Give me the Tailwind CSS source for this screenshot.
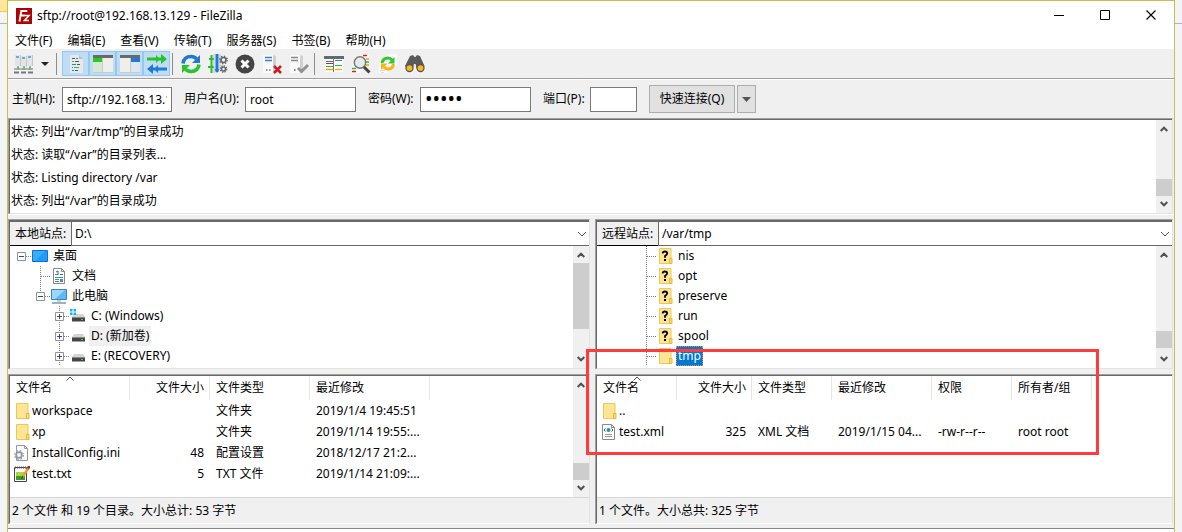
<!DOCTYPE html>
<html lang="zh-CN">
<head>
  <meta charset="UTF-8">
  <title>sftp://root@192.168.13.129 - FileZilla</title>
  <script src="https://cdn.jsdelivr.net/npm/@tailwindcss/browser@4"></script>
</head>
<body class="min-h-screen bg-[#f3f4f6] font-['Noto_Sans','Noto_Sans_CJK_SC',sans-serif] text-xs text-black">

  <!-- shared icons -->
  <svg class="hidden">
    <symbol id="folder" viewBox="0 0 14 16">
      <path d="M.5.5h11.500v15H.5z" fill="#fde596" stroke="#ecc85a"/>
      <path d="M10.500 10.500h2.500v5h-2.500z" fill="#fbd873" stroke="#e5b93c"/>
    </symbol>
    <symbol id="unknown" viewBox="0 0 14 16">
      <path d="M.5.5h11.500v15H.5z" fill="#fde596" stroke="#ecc85a"/>
      <path d="M10.500 10.500h2.500v5h-2.500z" fill="#fbd873" stroke="#e5b93c"/>
      <path d="M3.800 5.500V4.500Q4 3.500 6 3.500t2.300 1.600Q8.300 6.500 6 8v1.800" fill="none" stroke="#000" stroke-width="1.800"/>
      <path d="M5 11h2v2H5z"/>
    </symbol>
    <symbol id="drive" viewBox="0 0 17 16">
      <path d="M4 6h9l2 3H2z" fill="#d4d4d4"/>
      <path d="M2 9h13v4.500H2z" fill="#454545"/>
      <path d="M2 9h13v1H2z" fill="#8a8a8a"/>
      <path d="M11 11h2v1h-2z" fill="#38e04a"/>
    </symbol>
    <symbol id="up" viewBox="0 0 8 6"><path d="M.7 5 4 1.700 7.300 5" fill="none" stroke="#505050" stroke-width="2"/></symbol>
    <symbol id="down" viewBox="0 0 8 6"><path d="M.7 1 4 4.300 7.300 1" fill="none" stroke="#505050" stroke-width="2"/></symbol>
    <symbol id="chevron" viewBox="0 0 10 6"><path d="M1 1l4 4 4-4" fill="none" stroke="#555"/></symbol>
    <symbol id="box-minus" viewBox="0 0 9 9"><path d="M.5.5h8v8h-8z" fill="#fff" stroke="#919191"/><path d="M2 4.500h5" stroke="#2b4aa0"/></symbol>
    <symbol id="box-plus" viewBox="0 0 9 9"><path d="M.5.5h8v8h-8z" fill="#fff" stroke="#919191"/><path d="M2 4.500h5M4.500 2v5" stroke="#2b4aa0"/></symbol>
    <symbol id="drive-line" viewBox="0 0 60 20">
      <path d="M49.500 0v20M54 10.500h6" stroke="#808080" stroke-dasharray="1 1"/>
      <use href="#box-plus" x="45" y="6" width="9" height="9"/>
    </symbol>
    <symbol id="remote-line" viewBox="0 0 61 20"><path d="M49.500 0v20M50 10.500h10" stroke="#808080" fill="none" stroke-dasharray="1 1"/></symbol>
  </svg>

  <div class="relative flex min-h-screen">
    <div class="w-[7px] shrink-0">
      <div class="h-3 border-b border-[#f3c95b] bg-[#ffe699]"></div>
      <div class="h-3 border-b border-[#b4b4b4]"></div>
    </div>

    <div class="flex min-w-0 flex-1 flex-col border-x border-t border-[#cdbb4a] bg-[#f0f0f0]">
      <!-- title bar -->
      <header class="flex h-[29px] items-center bg-white pl-2">
        <svg class="size-4 shrink-0" viewBox="0 0 16 16">
          <path d="M0 0h16v16H0z" fill="#b40000"/>
          <path d="M.5.5h15v15H.5z" fill="none" stroke="#8c1010" stroke-dasharray="1 1"/>
          <path d="M3.500 13.500 5.300 3h6M4.500 7.500h4" fill="none" stroke="#fff" stroke-width="2"/>
          <path d="M8 7.500h5L8.500 12.500H13" fill="none" stroke="#fff" stroke-width="1.600"/>
        </svg>
        <h1 class="ml-[5px] flex-1">sftp://root@192.168.13.129 - FileZilla</h1>
        <button aria-label="最小化" class="grid h-full w-[46px] place-items-center"><svg class="size-[11px]" viewBox="0 0 11 11"><path d="M0 5.500h10" stroke="#000"/></svg></button>
        <button aria-label="最大化" class="grid h-full w-[46px] place-items-center"><svg class="size-[11px]" viewBox="0 0 11 11"><path d="M.5.5h9v9h-9z" fill="none" stroke="#000"/></svg></button>
        <button aria-label="关闭" class="grid h-full w-[46px] place-items-center"><svg class="size-[11px]" viewBox="0 0 11 11"><path d="M.5.5l9 9M9.500.5l-9 9" stroke="#000" stroke-width="1.200"/></svg></button>
      </header>

      <nav class="flex h-[19px] items-center gap-[15px] bg-white pt-0.5 pl-[7px]">
        <a href="#">文件(F)</a><a href="#">编辑(E)</a><a href="#">查看(V)</a><a href="#">传输(T)</a><a href="#">服务器(S)</a><a href="#">书签(B)</a><a href="#">帮助(H)</a>
      </nav>

      <!-- toolbar -->
      <div class="flex h-[30px] items-center border-b border-[#a0a0a0] pl-0.5">
        <button aria-label="站点管理器" class="grid h-[25px] w-7 place-items-center">
          <svg class="size-5" viewBox="0 0 20 20">
            <path d="M1 1h6v11H1zM7 2h6v11H7zM13 1h6v11h-6z" fill="#e2e5e8"/>
            <path d="M2 3h3M8 4h3M14 3h3" stroke="#4f93d8" stroke-width="1.500"/>
            <path d="M6.500 1v11M12.500 2v11M18.500 1v11" stroke="#c4c7ca"/>
            <path d="M4 12v4M10 12v4M16 12v4M0 15h19" stroke="#9a9a9a" stroke-width="1.500"/>
            <path d="M3 13h2v2H3zM9 13h2v2H9zM15 13h2v2h-2z" fill="#66bb66"/>
            <path d="M0 18.500h5M7 18.500h5M14 18.500h5" stroke="#777" stroke-width="2"/>
          </svg>
        </button>
        <button aria-label="站点列表" class="grid h-[25px] w-[14px] place-items-center"><svg class="h-1 w-2" viewBox="0 0 8 4"><path d="M0 0h8L4 4z" fill="#222"/></svg></button>
        <div class="mx-1 h-[22px] w-px bg-[#8d8d8d]"></div>
        <div class="ml-px flex">
          <button aria-label="消息日志" class="grid h-[25px] w-[27px] place-items-center border border-[#90c8f6] bg-[#c0dcf3]">
            <svg class="size-5" viewBox="0 0 20 20">
              <path d="M4 1h9l4 4v14H4z" fill="#e4e9ec"/><path d="M13 1l4 4h-4z" fill="#b9bfc4"/>
              <path d="M6 4.500h3M9 7.500h4M11 10.500h3M9 16.500h3" stroke="#555"/>
              <path d="M6 10.500h4M6 16.500h2" stroke="#2a80d8"/>
              <path d="M6 7.500h2M8 13.500h5" stroke="#3ab83a"/>
              <path d="M10 4.500h2M6 13.500h1" stroke="#2a80d8"/>
            </svg>
          </button>
          <button aria-label="本地目录树" class="grid h-[25px] w-[27px] place-items-center border border-[#90c8f6] bg-[#c0dcf3]">
            <svg class="size-5" viewBox="0 0 20 20">
              <path d="M0 1h20v18H0z" fill="#eeeeea"/><path d="M0 1h20v3H0z" fill="#6a6a6a"/>
              <path d="M0 4h9v4H0z" fill="#24cc24"/><path d="M0 8h9v11H0z" fill="#d7e8d2"/><path d="M9.500 4v15M0 18.500h20" stroke="#c8ccc8"/>
            </svg>
          </button>
          <button aria-label="远程目录树" class="grid h-[25px] w-[27px] place-items-center border border-[#90c8f6] bg-[#c0dcf3]">
            <svg class="size-5" viewBox="0 0 20 20">
              <path d="M0 1h20v18H0z" fill="#eeeeea"/><path d="M0 1h20v3H0z" fill="#6a6a6a"/>
              <path d="M11 4h9v4h-9z" fill="#1f7ad6"/><path d="M11 8h9v11h-9z" fill="#dce6f0"/><path d="M10.500 4v15M0 18.500h20" stroke="#c8ccc8"/>
            </svg>
          </button>
          <button aria-label="传输队列" class="grid h-[25px] w-[27px] place-items-center border border-[#90c8f6] bg-[#c0dcf3]">
            <svg class="size-5" viewBox="0 0 20 20">
              <path d="M0 3.500h9V1l2.500 2.500H14V0l6 5-6 5V6.500h-2.500L9 9V6.500H0z" fill="#26c526"/>
              <path d="M20 13.500h-9V11l-2.500 2.500H6V10l-6 5 6 5v-3.500h2.500L11 19v-2.500h9z" fill="#1f7ad6"/>
            </svg>
          </button>
        </div>
        <div class="mr-1 ml-0.5 h-[22px] w-px bg-[#8d8d8d]"></div>
        <button aria-label="刷新" class="grid h-[25px] w-[27px] place-items-center">
          <svg class="size-5" viewBox="0 0 20 20">
            <path d="M2 9.500Q3 2.500 10 2.500 13.500 2.500 15.500 5" fill="none" stroke="#1f7ad6" stroke-width="3.600"/><path d="M19 1v8h-8z" fill="#1f7ad6"/>
            <path d="M18 10.500Q17 17.500 10 17.500 6.500 17.500 4.500 15" fill="none" stroke="#26c52f" stroke-width="3.600"/><path d="M1 19v-8h8z" fill="#26c52f"/>
          </svg>
        </button>
        <button aria-label="处理队列" class="grid h-[25px] w-[27px] place-items-center">
          <svg class="size-5" viewBox="0 0 20 20">
            <path d="M3.500 1v18" stroke="#2bbd2b" stroke-width="2"/><path d="M1 5h5M0 13h6" stroke="#2bbd2b" stroke-width="2"/>
            <path d="M9 0v18" stroke="#1f7ad6" stroke-width="3"/><path d="M6.500 15h5L9 19z" fill="#1f7ad6"/><path d="M6 0v19M12 0v14" stroke="#9fb6c8" stroke-width=".8"/>
            <circle cx="15.500" cy="6" r="2.500" fill="none" stroke="#666" stroke-width="1.600"/><circle cx="15.500" cy="6" r="3.700" fill="none" stroke="#666" stroke-width="1.400" stroke-dasharray="1.400 1.500"/>
            <circle cx="15.500" cy="15" r="2" fill="none" stroke="#666" stroke-width="1.500"/><circle cx="15.500" cy="15" r="3.200" fill="none" stroke="#666" stroke-width="1.300" stroke-dasharray="1.300 1.200"/>
          </svg>
        </button>
        <button aria-label="取消" class="grid h-[25px] w-[27px] place-items-center">
          <svg class="size-5" viewBox="0 0 20 20"><circle cx="10" cy="10" r="9.500" fill="#444"/><path d="M6.500 6.500l7 7M13.500 6.500l-7 7" stroke="#fff" stroke-width="3"/></svg>
        </button>
        <button aria-label="断开连接" class="grid h-[25px] w-[27px] place-items-center">
          <svg class="size-5" viewBox="0 0 20 20">
            <path d="M1 1h10v18H1z" fill="#fafafa"/><path d="M11 1l3 1v16l-3 1z" fill="#d0d0d0"/>
            <path d="M3 3.500h7M3 6.500h7" stroke="#3a80c8" stroke-width="1.500"/><path d="M4 15h1.500v2H4zM7 15h1.500v2H7z" fill="#999"/>
            <path d="M12 12l7 7M19 12l-7 7" stroke="#c81e1e" stroke-width="2.500"/>
          </svg>
        </button>
        <button aria-label="重新连接" class="grid h-[25px] w-[27px] place-items-center">
          <svg class="size-5" viewBox="0 0 20 20">
            <path d="M1 1h10v18H1z" fill="#fafafa"/><path d="M11 1l3 1v16l-3 1z" fill="#d0d0d0"/>
            <path d="M2 3.500h7M2 6.500h7" stroke="#888" stroke-width="1.500"/><path d="M5 15h1.500v2H5z" fill="#888"/>
            <path d="M9 14l3.500 3.500L19 11" fill="none" stroke="#909090" stroke-width="3"/>
          </svg>
        </button>
        <div class="mx-0.5 h-[22px] w-px bg-[#8d8d8d]"></div>
        <div class="ml-[3px] flex">
          <button aria-label="过滤器" class="grid h-[25px] w-[27px] place-items-center">
            <svg class="size-5" viewBox="0 0 20 20">
              <path d="M1 3h18v15H1z" fill="#fff"/><path d="M0 2h20v3H0z" fill="#5f6a72"/>
              <path d="M2 7.500h7" stroke="#2a80d8"/><path d="M2 9.500h7" stroke="#d82020"/><path d="M2 12.500h7" stroke="#2bbd2b"/><path d="M2 15.500h7" stroke="#f0a000" stroke-width="1.500"/>
              <path d="M11 6.500h7" stroke="#2a80d8"/><path d="M11 11.500h7" stroke="#2bbd2b"/><path d="M11 15.500h7" stroke="#f0b030" stroke-width="1.500"/><path d="M9.500 5v13" stroke="#777"/>
            </svg>
          </button>
          <button aria-label="目录对比" class="grid h-[25px] w-[27px] place-items-center">
            <svg class="size-5" viewBox="0 0 20 20">
              <path d="M10 0h8v12h-8zM1 8h9v11H1z" fill="#f8f8f8"/>
              <path d="M12 1.500h4" stroke="#d82020" stroke-width="1.500"/><path d="M15 5h3M15 11h3" stroke="#f0a000" stroke-width="1.500"/><path d="M15 8h3M1 14.500h4" stroke="#2bbd2b" stroke-width="1.500"/><path d="M1 17.500h4" stroke="#d82020" stroke-width="1.500"/>
              <circle cx="9" cy="8.500" r="5.700" fill="#e3e9ee" fill-opacity=".9" stroke="#777" stroke-width="1.500"/><path d="M13 13l5.500 5.500" stroke="#444" stroke-width="3"/>
            </svg>
          </button>
          <button aria-label="同步浏览" class="grid h-[25px] w-[27px] place-items-center">
            <svg class="size-5" viewBox="0 0 20 20">
              <path d="M9 0h10v12H9zM1 8h9v11H1z" fill="#fafafa"/><path d="M2 16.500h5M3 18.500h3" stroke="#ddd"/>
              <path d="M4 9Q5 4 10 4q2.500 0 4 2" fill="none" stroke="#32c832" stroke-width="3"/><path d="M16.500 3v6.500H10z" fill="#32c832"/>
              <path d="M15.500 10Q15 15 10 15q-2.500 0-4-2" fill="none" stroke="#f8b515" stroke-width="3"/><path d="M3 16V9.500h6.500z" fill="#f8b515"/>
            </svg>
          </button>
          <button aria-label="查找文件" class="grid h-[25px] w-[27px] place-items-center">
            <svg class="size-5" viewBox="0 0 20 20">
              <path d="M5 2l3-1 1.500 2h1L12 1l3 1 4.500 10-3 3-5-1-1-4H9l-1 4-5 1-3-3z" fill="#5a5a5a"/>
              <circle cx="4.500" cy="14" r="3.500" fill="#fdb813" stroke="#555" stroke-width="1.300"/><circle cx="15.500" cy="14" r="3.500" fill="#fdb813" stroke="#555" stroke-width="1.300"/>
            </svg>
          </button>
        </div>
      </div>

      <!-- quickconnect -->
      <form class="flex h-[39px] items-center gap-3 border-t border-white pl-1">
        <div class="flex items-center"><label for="host" class="w-[50px]">主机(H):</label><input id="host" type="text" value="sftp://192.168.13.129" class="h-[25px] w-[110px] border border-[#7a7a7a] bg-white px-1"></div>
        <div class="flex items-center"><label for="user" class="w-[61px]">用户名(U):</label><input id="user" type="text" value="root" class="h-[25px] w-[111px] border border-[#7a7a7a] bg-white px-1"></div>
        <div class="flex items-center"><label for="pass" class="w-[52px]">密码(W):</label><input id="pass" type="password" value="12345" class="h-[25px] w-[111px] border border-[#7a7a7a] bg-white px-1 text-xl"></div>
        <div class="flex items-center"><label for="port" class="w-[47px]">端口(P):</label><input id="port" type="text" class="h-[25px] w-[47px] border border-[#7a7a7a] bg-white px-1"></div>
        <div class="flex gap-0.5">
          <button type="button" class="h-7 w-[86px] border border-[#adadad] bg-[#e1e1e1]">快速连接(Q)</button>
          <button type="button" aria-label="历史连接" class="grid h-7 w-[19px] place-items-center border border-[#adadad] bg-[#e1e1e1]"><svg class="h-[5px] w-[9px]" viewBox="0 0 9 5"><path d="M0 0h9L4.500 5z" fill="#555"/></svg></button>
        </div>
      </form>

      <!-- message log -->
      <section class="mr-px border-t border-l border-r border-t-[#a0a0a0] border-l-[#a0a0a0] border-r-[#e3e3e3]">
        <div class="flex border-t border-l border-t-[#696969] border-l-[#696969] border-b border-b-[#e3e3e3] bg-white">
          <div class="flex-1 pb-px pl-px leading-[23px]">
            <p>状态: 列出“/var/tmp”的目录成功</p>
            <p>状态: 读取“/var”的目录列表...</p>
            <p>状态: Listing directory /var</p>
            <p>状态: 列出“/var”的目录成功</p>
          </div>
          <div class="flex w-4 flex-col items-center bg-[#f0f0f0] py-1.5">
            <svg class="h-1.5 w-2"><use href="#up"/></svg>
            <div class="mt-auto mb-[5px] h-[17px] w-full bg-[#cdcdcd]"></div>
            <svg class="h-1.5 w-2"><use href="#down"/></svg>
          </div>
        </div>
      </section>

      <main class="grid grid-cols-[582fr_579fr] gap-x-[5px] gap-y-[5px] border-t border-white pt-1">
        <!-- local tree -->
        <section class="min-w-0 border-t border-l border-t-[#a0a0a0] border-l-[#a0a0a0] border-r border-r-[#e3e3e3]">
          <div class="border-t-2 border-l border-[#696969] border-b border-b-[#e3e3e3] bg-white">
            <div class="flex h-6">
              <label for="local" class="flex w-[61px] items-center border-b border-black bg-[#f0f0f0] pl-[5px]">本地站点:</label>
              <div class="grid flex-1 border-b border-l border-[#696969]">
                <select id="local" class="col-start-1 row-start-1 appearance-none px-[3px]"><option>D:\</option></select>
                <svg class="pointer-events-none col-start-1 row-start-1 mr-0.5 h-1.5 w-2.5 self-center justify-self-end"><use href="#chevron"/></svg>
              </div>
            </div>
            <div class="flex">
              <ul class="flex-1 pb-0.5">
                <li class="flex h-5 items-center">
                  <svg class="h-5 w-[22px]" viewBox="0 0 22 20"><path d="M16 10.500h6" stroke="#808080" stroke-dasharray="1 1"/><use href="#box-minus" x="7" y="6" width="9" height="9"/></svg>
                  <svg class="mr-1 h-4 w-[17px]" viewBox="0 0 17 16"><path d="M.5 2.500h15v11H.5z" fill="#1c9ef8" stroke="#1673c4"/><path d="M1 3h12L3 13H1z" fill="#36aefd"/><path d="M1 13.500h15" stroke="#0a5fa8" stroke-dasharray="2 10"/></svg>
                  <span>桌面</span>
                </li>
                <li class="flex h-5 items-center">
                  <svg class="h-5 w-[41px]" viewBox="0 0 41 20"><path d="M30.500 0v20M31 10.500h10" stroke="#808080" stroke-dasharray="1 1"/></svg>
                  <svg class="mr-1 h-4 w-[17px]" viewBox="0 0 17 16"><path d="M2.500.5h8l3 3v12h-11z" fill="#fff" stroke="#8a8a8a"/><path d="M10.500.5v3h3" fill="none" stroke="#8a8a8a"/><path d="M4 6.500h3M4 9.500h8M4 11.500h4M4 13.500h4" stroke="#4088b0"/><path d="M5 4l2-1v4M9 6.500h3" stroke="#2468a0" fill="none"/><path d="M9 11h3v3H9z" fill="#5b87a8"/></svg>
                  <span>文档</span>
                </li>
                <li class="flex h-5 items-center">
                  <svg class="h-5 w-[41px]" viewBox="0 0 41 20"><path d="M30.500 0v6M35 10.500h6" stroke="#808080" stroke-dasharray="1 1"/><use href="#box-minus" x="26" y="6" width="9" height="9"/></svg>
                  <svg class="mr-1 h-4 w-[17px]" viewBox="0 0 17 16"><path d="M.5 1.500h15v10H.5z" fill="#5db9f5" stroke="#3c85b8"/><path d="M1 2h13L4 11H1z" fill="#9bd6fb"/><path d="M6 12h4v2H6z" fill="#c8d4dc"/><path d="M1 15h14" stroke="#7b98aa" stroke-width="1.500"/></svg>
                  <span>此电脑</span>
                </li>
                <li class="flex h-5 items-center">
                  <svg class="h-5 w-[60px]"><use href="#drive-line"/></svg>
                  <svg class="mr-1 h-4 w-[17px]" viewBox="0 0 17 16"><use href="#drive" width="17" height="16"/><path d="M0 1h2.500v2.500H0zM3.500 1H6v2.500H3.500zM0 4.500h2.500V7H0zM3.500 4.500H6V7H3.500z" fill="#12b4f0"/></svg>
                  <span>C: (Windows)</span>
                </li>
                <li class="flex h-5 items-center">
                  <svg class="h-5 w-[60px]"><use href="#drive-line"/></svg>
                  <svg class="mr-0.5 h-4 w-[17px]"><use href="#drive"/></svg>
                  <span class="bg-[#f0f0f0] px-0.5 leading-5">D: (新加卷)</span>
                </li>
                <li class="flex h-5 items-center">
                  <svg class="h-5 w-[60px]"><use href="#drive-line"/></svg>
                  <svg class="mr-1 h-4 w-[17px]"><use href="#drive"/></svg>
                  <span>E: (RECOVERY)</span>
                </li>
              </ul>
              <div class="flex w-4 flex-col items-center bg-[#f0f0f0] py-1.5">
                <svg class="h-1.5 w-2"><use href="#up"/></svg>
                <div class="mt-[5px] h-[66px] w-full bg-[#cdcdcd]"></div>
                <svg class="mt-auto h-1.5 w-2"><use href="#down"/></svg>
              </div>
            </div>
          </div>
        </section>

        <!-- remote tree -->
        <section class="mr-px min-w-0 border-t border-l border-t-[#a0a0a0] border-l-[#a0a0a0] border-r border-r-[#e3e3e3]">
          <div class="border-t-2 border-l border-[#696969] border-b border-b-[#e3e3e3] bg-white">
            <div class="flex h-6">
              <label for="remote" class="flex w-[61px] items-center border-b border-black bg-[#f0f0f0] pl-[5px]">远程站点:</label>
              <div class="grid flex-1 border-b border-l border-[#696969]">
                <select id="remote" class="col-start-1 row-start-1 appearance-none px-[3px]"><option>/var/tmp</option></select>
                <svg class="pointer-events-none col-start-1 row-start-1 mr-0.5 h-1.5 w-2.5 self-center justify-self-end"><use href="#chevron"/></svg>
              </div>
            </div>
            <div class="flex">
              <ul class="flex-1 pb-0.5">
                <li class="flex h-5 items-center"><svg class="h-5 w-[62px]"><use href="#remote-line" width="61"/></svg><svg class="mr-[5px] h-4 w-3.5"><use href="#unknown"/></svg><span>nis</span></li>
                <li class="flex h-5 items-center"><svg class="h-5 w-[62px]"><use href="#remote-line" width="61"/></svg><svg class="mr-[5px] h-4 w-3.5"><use href="#unknown"/></svg><span>opt</span></li>
                <li class="flex h-5 items-center"><svg class="h-5 w-[62px]"><use href="#remote-line" width="61"/></svg><svg class="mr-[5px] h-4 w-3.5"><use href="#unknown"/></svg><span>preserve</span></li>
                <li class="flex h-5 items-center"><svg class="h-5 w-[62px]"><use href="#remote-line" width="61"/></svg><svg class="mr-[5px] h-4 w-3.5"><use href="#unknown"/></svg><span>run</span></li>
                <li class="flex h-5 items-center"><svg class="h-5 w-[62px]"><use href="#remote-line" width="61"/></svg><svg class="mr-[5px] h-4 w-3.5"><use href="#unknown"/></svg><span>spool</span></li>
                <li class="flex h-5 items-center"><svg class="h-5 w-[62px]"><use href="#remote-line" width="61"/></svg><svg class="mr-[3px] h-4 w-3.5"><use href="#folder"/></svg><span class="border border-dotted border-[#ff8728] bg-[#0078d7] px-px leading-[18px] text-white">tmp</span></li>
              </ul>
              <div class="flex w-4 flex-col items-center bg-[#f0f0f0] py-1.5">
                <svg class="h-1.5 w-2"><use href="#up"/></svg>
                <div class="mt-auto mb-2 h-[17px] w-full bg-[#cdcdcd]"></div>
                <svg class="h-1.5 w-2"><use href="#down"/></svg>
              </div>
            </div>
          </div>
        </section>

        <!-- local files -->
        <section class="min-w-0 border-t border-l border-t-[#a0a0a0] border-l-[#a0a0a0] border-r border-r-[#e3e3e3]">
          <div class="border-t border-l border-[#696969] border-b border-b-white">
            <div class="flex border-b border-[#d7d7d7] bg-white">
              <div class="flex-1 pb-[13px]">
                <table class="w-[420px] table-fixed border-separate border-spacing-0">
                  <colgroup><col class="w-[120px]"><col class="w-20"><col class="w-[100px]"><col class="w-[120px]"></colgroup>
                  <thead>
                    <tr class="h-6 text-left">
                      <th class="relative border-r border-[#e5e5e5] pl-1.5 font-normal">文件名<svg class="absolute top-0 left-14 h-[5px] w-2" viewBox="0 0 8 5"><path d="M.5 4.500 4 1l3.500 3.500" fill="none" stroke="#555"/></svg></th>
                      <th class="border-r border-[#e5e5e5] pr-[5px] text-right font-normal">文件大小</th>
                      <th class="border-r border-[#e5e5e5] pl-1.5 font-normal">文件类型</th>
                      <th class="border-r border-[#e5e5e5] pl-1.5 font-normal">最近修改</th>
                    </tr>
                  </thead>
                  <tbody>
                    <tr class="h-[21px]">
                      <td><div class="flex items-center pl-1.5"><svg class="mr-0.5 h-4 w-3.5"><use href="#folder"/></svg>workspace</div></td>
                      <td></td><td class="pl-1.5">文件夹</td><td class="pl-1.5">2019/1/4 19:45:51</td>
                    </tr>
                    <tr class="h-[21px]">
                      <td><div class="flex items-center pl-1.5"><svg class="mr-0.5 h-4 w-3.5"><use href="#folder"/></svg>xp</div></td>
                      <td></td><td class="pl-1.5">文件夹</td><td class="pl-1.5">2019/1/14 19:55:...</td>
                    </tr>
                    <tr class="h-[21px]">
                      <td><div class="flex items-center pl-1"><svg class="mr-0.5 size-4" viewBox="0 0 16 16"><path d="M2.500.5h8l3 3v12h-11z" fill="#fdfdfd" stroke="#999"/><path d="M10.500.5v3h3" fill="none" stroke="#999"/><circle cx="5" cy="10" r="3" fill="#ddd" stroke="#8b97a0" stroke-width="1.500"/><circle cx="5" cy="10" r="4.300" fill="none" stroke="#9aa5ad" stroke-width="1.300" stroke-dasharray="1.700 1.700"/><circle cx="5" cy="10" r="1" fill="#fff"/></svg>InstallConfig.ini</div></td>
                      <td class="pr-1.5 text-right">48</td><td class="pl-1.5">配置设置</td><td class="pl-1.5">2018/12/17 21:2...</td>
                    </tr>
                    <tr class="h-[21px]">
                      <td><div class="flex items-center pl-1"><svg class="mr-0.5 size-4" viewBox="0 0 16 16"><path d="M.5 1.500h12v14H.5z" fill="#fff" stroke="#444"/><path d="M2 6h9v8H2z" fill="#a6d84c"/><path d="M2 10h9v4H2z" fill="#3b9c28"/><path d="M1 1.500h11" stroke="#555" stroke-width="2" stroke-dasharray="1 1"/><path d="M14.500 2 8.500 11" stroke="#f0a020" stroke-width="2.500"/><path d="M15.500 0 14 2.500" stroke="#a02020" stroke-width="2.500"/><path d="M9 10l-1.500 2.500" stroke="#333"/></svg>test.txt</div></td>
                      <td class="pr-1.5 text-right">5</td><td class="pl-1.5">TXT 文件</td><td class="pl-1.5">2019/1/14 21:09:...</td>
                    </tr>
                  </tbody>
                </table>
              </div>
              <div class="flex w-4 flex-col items-center bg-[#f0f0f0] py-1.5">
                <svg class="h-1.5 w-2"><use href="#up"/></svg>
                <div class="mt-auto mb-[5px] h-[17px] w-full bg-[#cdcdcd]"></div>
                <svg class="h-1.5 w-2"><use href="#down"/></svg>
              </div>
            </div>
            <p class="pl-0.5 leading-[25px]">2 个文件 和 19 个目录。大小总计: 53 字节</p>
          </div>
        </section>

        <!-- remote files -->
        <section class="mr-px min-w-0 border-t border-l border-t-[#a0a0a0] border-l-[#a0a0a0] border-r border-r-[#e3e3e3]">
          <div class="flex h-full flex-col border-t border-l border-[#696969] border-b border-b-white">
            <div class="flex-1 border-b border-[#d7d7d7] bg-white">
              <table class="w-[495px] table-fixed border-separate border-spacing-0">
                <colgroup><col class="w-20"><col class="w-[75px]"><col class="w-20"><col class="w-[100px]"><col class="w-20"><col class="w-20"></colgroup>
                <thead>
                  <tr class="h-6 text-left">
                    <th class="relative border-r border-[#e5e5e5] pl-1.5 font-normal">文件名<svg class="absolute top-0 left-9 h-[5px] w-2" viewBox="0 0 8 5"><path d="M.5 4.500 4 1l3.500 3.500" fill="none" stroke="#555"/></svg></th>
                    <th class="border-r border-[#e5e5e5] pr-[5px] text-right font-normal">文件大小</th>
                    <th class="border-r border-[#e5e5e5] pl-1.5 font-normal">文件类型</th>
                    <th class="border-r border-[#e5e5e5] pl-1.5 font-normal">最近修改</th>
                    <th class="border-r border-[#e5e5e5] pl-1.5 font-normal">权限</th>
                    <th class="border-r border-[#e5e5e5] pl-1.5 font-normal">所有者/组</th>
                  </tr>
                </thead>
                <tbody>
                  <tr class="h-[21px]">
                    <td><div class="flex items-center pl-1.5"><svg class="mr-0.5 h-4 w-3.5"><use href="#folder"/></svg>..</div></td>
                    <td></td><td></td><td></td><td></td><td></td>
                  </tr>
                  <tr class="h-[21px]">
                    <td><div class="flex items-center pl-1"><svg class="mr-0.5 size-4" viewBox="0 0 16 16"><path d="M1.500.5h9l3 3v12h-12z" fill="#fdfdfd" stroke="#8a8a8a"/><path d="M10.500.5v3h3" fill="none" stroke="#8a8a8a"/><path d="M4.500 4.500 3 6l1.500 1.500M10.500 4.500 12 6l-1.500 1.500" fill="none" stroke="#555"/><circle cx="7.500" cy="6" r="2" fill="#1f9a9a"/><path d="M4 10.500h7M4 12.500h7" stroke="#9a9aa8"/></svg>test.xml</div></td>
                    <td class="pr-1.5 text-right">325</td><td class="pl-1.5">XML 文档</td><td class="pl-1.5">2019/1/15 04...</td><td class="pl-1.5">-rw-r--r--</td><td class="pl-1.5">root root</td>
                  </tr>
                </tbody>
              </table>
            </div>
            <p class="pl-0.5 leading-[25px]">1 个文件。大小总共: 325 字节</p>
          </div>
        </section>
      </main>

      <footer class="mt-1 flex-1 border-t border-[#828790] bg-white"></footer>
    </div>

    <div class="w-[7px] shrink-0"><div class="h-6 border-b border-[#b4b4b4]"></div></div>

    <!-- highlight drawn over the remote pane -->
    <div class="pointer-events-none absolute top-[349px] left-[586px] h-[106px] w-[513px] border-3 border-[#ff3b3b]"></div>
  </div>

</body>
</html>
